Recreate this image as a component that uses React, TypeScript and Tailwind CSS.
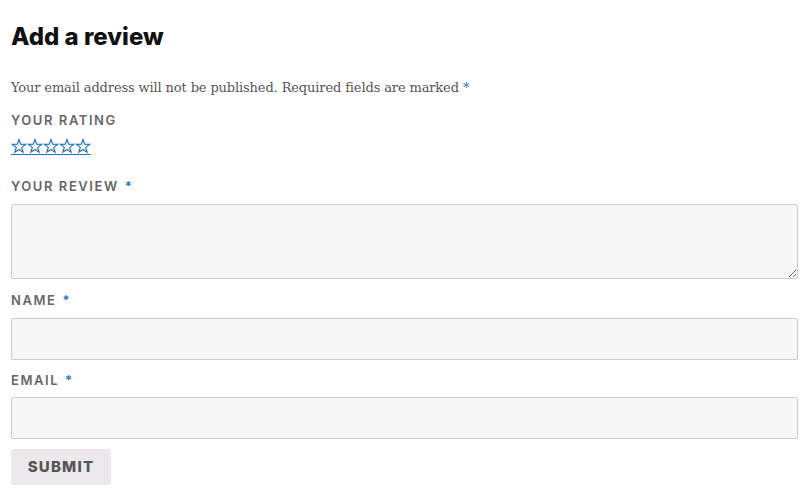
import React from "react";

const Star = () => (
	<svg width="16" height="16" viewBox="0 0 24 24" fill="none" stroke="currentColor" strokeWidth="1.8" strokeLinejoin="miter">
		<path d="M12 2.5l2.6 6.9 7.1.2-5.6 4.5 2 7.1L12 17.1l-6.1 4.1 2-7.1-5.6-4.5 7.1-.2z" />
	</svg>
);

const Label = ({ text, required }: { text: string; required?: boolean }) => (
	<label className="block text-[13px] font-semibold uppercase tracking-[0.12em] text-[#666] [font-family:Inter,sans-serif]">
		{text}
		{required && <span className="ml-1.5 text-[#1e73be]">*</span>}
	</label>
);

const App = () => {
	return (
		<div className="w-[806px] h-[494px] bg-white px-[11px] pt-[22px]">
			<h2 className="text-[24px] font-extrabold text-[#111] [font-family:Inter,sans-serif] leading-[30px]">
				Add a review
			</h2>
			<p className="mt-[27px] text-[13px] tracking-[-0.01em] text-[#555] [font-family:'DejaVu_Serif',serif] leading-[18px]">
				Your email address will not be published. Required fields are marked{" "}
				<span className="text-[#1e73be]">*</span>
			</p>
			<div className="mt-[14px]">
				<Label text="Your rating" />
				<a href="#" className="mt-[7px] inline-flex border-b border-[#1e73be] text-[#1e73be]">
					<Star />
					<Star />
					<Star />
					<Star />
					<Star />
				</a>
			</div>
			<div className="mt-[17px]">
				<Label text="Your review" required />
				<textarea className="mt-[8px] block w-[787px] h-[75px] bg-[#f7f7f7] border border-[#ccc] rounded-[2px]" />
			</div>
			<div className="mt-[12px]">
				<Label text="Name" required />
				<input type="text" className="mt-[7px] block w-[787px] h-[42px] bg-[#f7f7f7] border border-[#ccc] rounded-[2px]" />
			</div>
			<div className="mt-[11px]">
				<Label text="Email" required />
				<input type="text" className="mt-[7px] block w-[787px] h-[42px] bg-[#f7f7f7] border border-[#ccc] rounded-[2px]" />
			</div>
			<button className="mt-[10px] w-[100px] h-[36px] rounded-[3px] bg-[#ebe9eb] text-[15px] font-extrabold uppercase tracking-[0.08em] text-[#555] [font-family:Inter,sans-serif]">
				Submit
			</button>
		</div>
	);
};

export default App;
